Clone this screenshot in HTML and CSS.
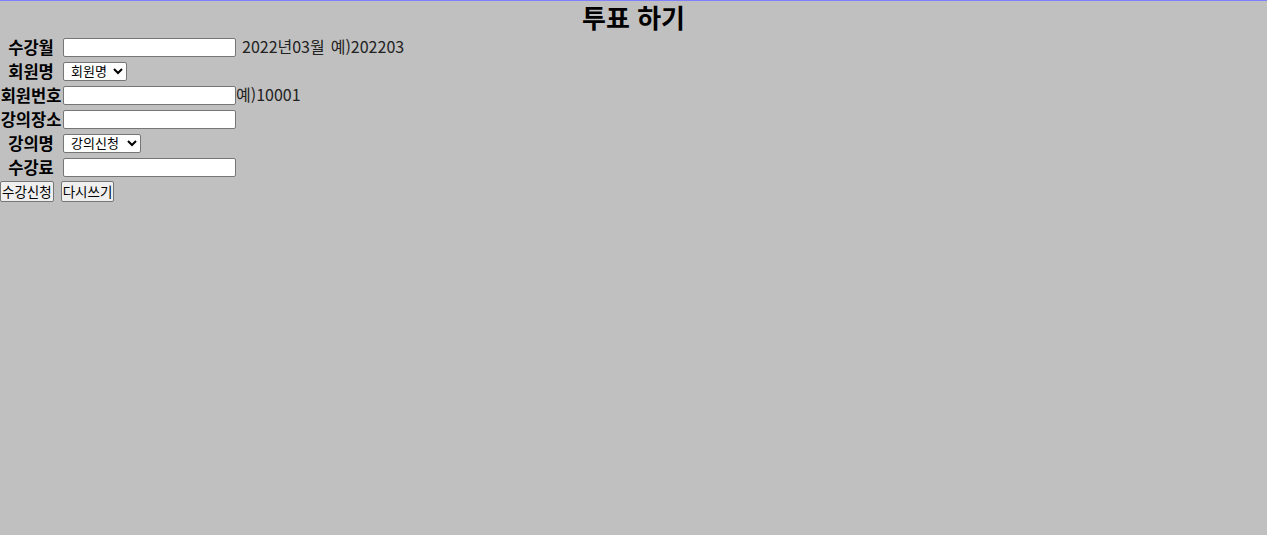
FILE: index.html
```html
<!DOCTYPE html>
<html lang="ko">
<head>
<meta charset="utf-8">
<title>투표 하기</title>
<link rel="stylesheet" href="styles.css">
</head>
<body>
<h1 class="title">투표 하기</h1>
<form class="form">
<table class="grid">
  <tr>
    <th>수강월</th>
    <td><div class="cell"><input class="field" type="text"><span class="hint spaced">2022년03월</span><span class="hint spaced">예)202203</span></div></td>
  </tr>
  <tr>
    <th>회원명</th>
    <td><div class="cell"><select class="pick pick-name"><option>회원명</option></select></div></td>
  </tr>
  <tr>
    <th>회원번호</th>
    <td><div class="cell"><input class="field" type="text"><span class="hint">예)10001</span></div></td>
  </tr>
  <tr>
    <th>강의장소</th>
    <td><div class="cell"><input class="field" type="text"></div></td>
  </tr>
  <tr>
    <th>강의명</th>
    <td><div class="cell"><select class="pick pick-class"><option>강의신청</option></select></div></td>
  </tr>
  <tr>
    <th>수강료</th>
    <td><div class="cell"><input class="field" type="text"></div></td>
  </tr>
  <tr>
    <td colspan="2">
      <div class="actions">
        <button type="submit" class="btn">수강신청</button>
        <button type="reset" class="btn">다시쓰기</button>
      </div>
    </td>
  </tr>
</table>
</form>
</body>
</html>
```
FILE: styles.css
```css
html, body {
  margin: 0;
  padding: 0;
}
body {
  background: #c0c0c0;
  border-top: 1px solid #8080ff;
  font-family: "Noto Sans CJK KR", "Noto Sans", sans-serif;
  color: #000;
  min-height: 534px;
}
.title {
  margin: 0;
  height: 34px;
  line-height: 32px;
  font-size: 26px;
  font-weight: bold;
  text-align: center;
}
.form {
  margin: 0;
}
.grid {
  border-collapse: collapse;
  border-spacing: 0;
}
.grid th,
.grid td {
  padding: 0;
  height: 24px;
  vertical-align: middle;
}
.grid th {
  width: 62px;
  font-size: 16.5px;
  font-weight: bold;
  text-align: center;
  white-space: nowrap;
  line-height: 22px;
}
.cell {
  display: flex;
  align-items: center;
  height: 24px;
  font-size: 16px;
  white-space: nowrap;
}
.field {
  box-sizing: border-box;
  width: 173px;
  height: 19px;
  margin: 0 0 0 1px;
  padding: 0 2px;
  border: 1px solid #767676;
  border-radius: 2px;
  background: #fff;
  font-size: 13px;
}
.hint {
  font-size: 16px;
  line-height: 18px;
  color: #222;
  position: relative;
  top: -1px;
}
.spaced {
  margin-left: 6px;
}
.pick {
  box-sizing: border-box;
  height: 19px;
  margin: 0 0 0 1px;
  padding: 0 0 0 3px;
  border: 1px solid #767676;
  border-radius: 2px;
  background: #fff;
  font-family: "Liberation Sans", "Noto Sans CJK KR", sans-serif;
  font-size: 13px;
}
.pick-name {
  width: 64px;
}
.pick-class {
  width: 78px;
}
.actions {
  display: flex;
  gap: 7px;
  align-items: center;
  height: 24px;
}
.btn {
  box-sizing: border-box;
  height: 21px;
  margin: 0;
  padding: 0 1px;
  border: 1px solid #767676;
  border-radius: 2px;
  background: #efefef;
  font-family: "Noto Sans CJK KR", sans-serif;
  font-size: 13.5px;
  line-height: 17px;
  color: #000;
}
```
